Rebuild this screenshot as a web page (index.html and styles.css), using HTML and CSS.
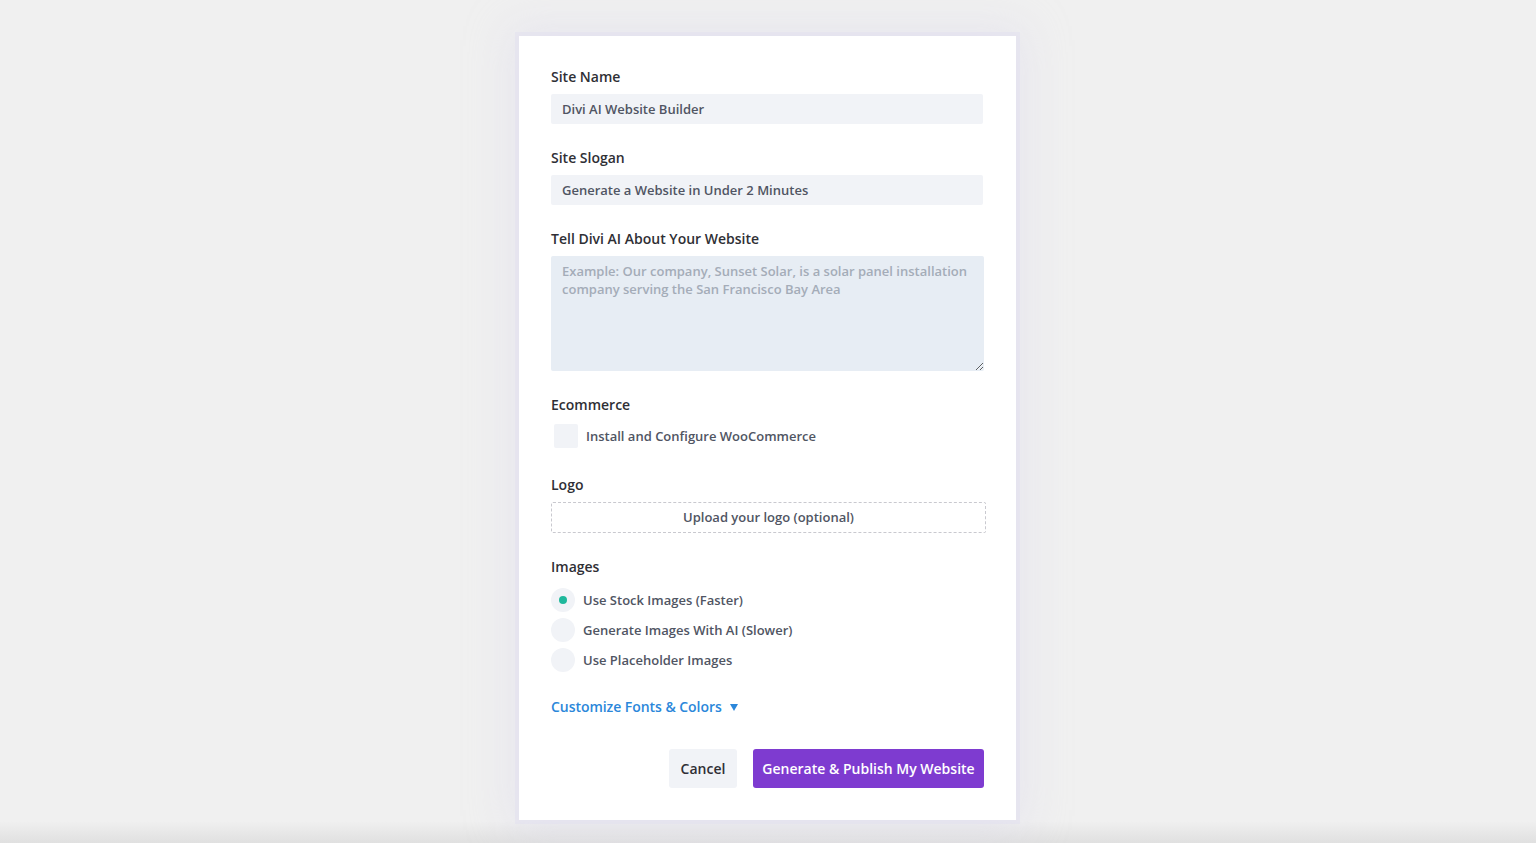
FILE: index.html
```html
<!DOCTYPE html>
<html lang="en">
<head>
<meta charset="utf-8">
<title>Divi AI Website Builder</title>
<link rel="stylesheet" href="styles.css">
</head>
<body>
<div class="page">
  <form class="card">
    <div class="field">
      <label class="label">Site Name</label>
      <div class="input">Divi AI Website Builder</div>
    </div>
    <div class="field">
      <label class="label">Site Slogan</label>
      <div class="input">Generate a Website in Under 2 Minutes</div>
    </div>
    <div class="field">
      <label class="label">Tell Divi AI About Your Website</label>
      <textarea class="textarea" placeholder="Example: Our company, Sunset Solar, is a solar panel installation company serving the San Francisco Bay Area"></textarea>
    </div>
    <div class="field field-ecom">
      <label class="label">Ecommerce</label>
      <div class="check-row">
        <span class="checkbox"></span>
        <span class="option-text">Install and Configure WooCommerce</span>
      </div>
    </div>
    <div class="field">
      <label class="label">Logo</label>
      <div class="upload">Upload your logo (optional)</div>
    </div>
    <div class="field field-images">
      <label class="label">Images</label>
      <div class="radios">
        <div class="radio-row"><span class="radio checked"></span><span class="option-text">Use Stock Images (Faster)</span></div>
        <div class="radio-row"><span class="radio"></span><span class="option-text">Generate Images With AI (Slower)</span></div>
        <div class="radio-row"><span class="radio"></span><span class="option-text">Use Placeholder Images</span></div>
      </div>
    </div>
    <div class="customize">Customize Fonts &amp; Colors <span class="caret"></span></div>
    <div class="actions">
      <button type="button" class="btn btn-cancel">Cancel</button>
      <button type="button" class="btn btn-primary">Generate &amp; Publish My Website</button>
    </div>
  </form>
</div>
</body>
</html>
```

FILE: styles.css
```css
* { box-sizing: border-box; }
html, body { margin: 0; height: 100%; }
body {
  font-family: "Open Sans", "Noto Sans", sans-serif;
  background: linear-gradient(to bottom, #f0f0f0 0, #f0f0f0 calc(100% - 22px), #e0e0e0 100%);
  color: #32373c;
  overflow: hidden;
}
.page {
  padding-top: 36px;
  display: flex;
  justify-content: center;
}
.card {
  width: 497px;
  background: #fff;
  padding: 31px 32px 32px;
  box-shadow: 0 0 0 4px rgba(225, 223, 240, 0.5), 0 0 40px 10px rgba(215, 212, 235, 0.35);
  margin-left: -1px;
}
.field { margin-bottom: 24px; }
.label {
  display: block;
  font-size: 14px;
  font-weight: 600;
  line-height: 20px;
  color: #2f2f35;
  margin-bottom: 7px;
}
.input {
  height: 30px;
  width: 432px;
  background: #f1f3f7;
  border-radius: 2px;
  padding: 0 11px;
  font-size: 13px;
  font-weight: 600;
  line-height: 30px;
  color: #505563;
}
.textarea {
  display: block;
  width: 433px;
  height: 115px;
  border: 0;
  background: #e7edf4;
  border-radius: 2px;
  padding: 6px 11px;
  font-family: inherit;
  font-size: 13px;
  font-weight: 600;
  line-height: 18px;
  color: #505563;
  resize: vertical;
  outline: none;
}
.textarea::placeholder { color: #a4acb8; }
.field-ecom { margin-bottom: 27px; }
.field-ecom .label { margin-bottom: 9px; }
.check-row {
  display: flex;
  align-items: center;
  height: 24px;
  padding-left: 3px;
}
.checkbox {
  width: 24px;
  height: 24px;
  background: #f1f3f7;
  border-radius: 2px;
  margin-right: 8px;
}
.option-text {
  font-size: 13px;
  font-weight: 600;
  color: #505563;
}
.upload {
  width: 435px;
  height: 31px;
  border: 1px dashed #c9c9cf;
  border-radius: 2px;
  text-align: center;
  font-size: 13px;
  font-weight: 600;
  line-height: 29px;
  color: #505563;
}
.field-images { margin-bottom: 25px; }
.field-images .label { margin-bottom: 11px; }
.radios { display: flex; flex-direction: column; gap: 6px; }
.radio-row {
  display: flex;
  align-items: center;
  height: 24px;
}
.radio {
  width: 24px;
  height: 24px;
  border-radius: 50%;
  background: #f1f3f7;
  margin-right: 8px;
  display: flex;
  align-items: center;
  justify-content: center;
}
.radio.checked::after {
  content: "";
  width: 8px;
  height: 8px;
  border-radius: 50%;
  background: #1fb89c;
}
.customize {
  font-size: 14px;
  font-weight: 600;
  line-height: 20px;
  color: #2b87da;
  display: flex;
  align-items: center;
  letter-spacing: -0.05px;
}
.caret {
  display: inline-block;
  width: 0;
  height: 0;
  margin-left: 8px;
  margin-top: 1px;
  border-left: 4.5px solid transparent;
  border-right: 4.5px solid transparent;
  border-top: 7px solid #2b87da;
}
.actions {
  display: flex;
  justify-content: flex-end;
  gap: 16px;
  margin-top: 32px;
}
.btn {
  height: 39px;
  border: 0;
  border-radius: 3px;
  font-family: inherit;
  font-size: 14px;
  font-weight: 600;
  padding: 0;
  cursor: pointer;
}
.btn-cancel {
  background: #f1f3f7;
  color: #2f2f35;
  width: 68px;
}
.btn-primary {
  background: #7e3bd0;
  color: #fff;
  width: 231px;
}
```
